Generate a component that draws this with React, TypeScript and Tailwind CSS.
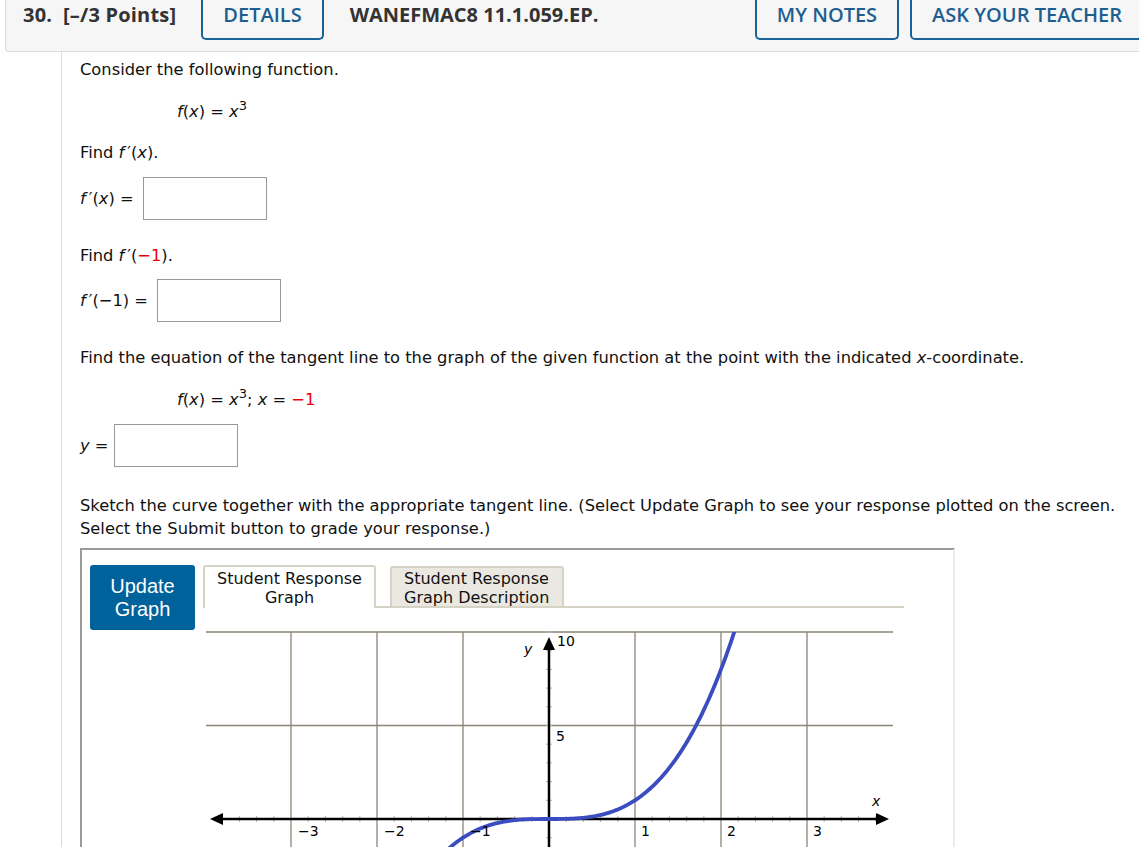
import React from 'react';

const verdana = { fontFamily: '"DejaVu Sans", Verdana, sans-serif' };

const px = (x: number) => 346 + 86 * x;
const py = (y: number) => 198 - 18.7 * y;

const curvePoints = () => {
  const pts: string[] = [];
  for (let x = -2.4; x <= 2.2; x += 0.02) {
    pts.push(`${px(x).toFixed(2)},${py(x * x * x).toFixed(2)}`);
  }
  return pts.join(' ');
};

const Graph = () => {
  const gridX = [-3, -2, -1, 1, 2, 3];
  const minor: number[] = [];
  for (let i = -19; i <= 19; i++) minor.push(i * 0.2);
  const yTicks: number[] = [];
  for (let i = -10; i <= 10; i++) if (i !== 0) yTicks.push(i);

  return (
    <svg width="700" height="240" className="block" style={verdana}>
      <defs>
        <clipPath id="plot">
          <rect x="3" y="11" width="687" height="300" />
        </clipPath>
      </defs>
      {/* grid */}
      <line x1="3" y1="11" x2="690" y2="11" stroke="#8c8474" strokeWidth="1.3" />
      <line x1="3" y1="104.5" x2="690" y2="104.5" stroke="#8c8474" strokeWidth="1.3" />
      {gridX.map((g) => (
        <line key={g} x1={px(g)} y1="11" x2={px(g)} y2="240" stroke="#8c8474" strokeWidth="1.3" />
      ))}
      {/* minor ticks */}
      {minor.map((m) => (
        <line key={m} x1={px(m)} y1="195" x2={px(m)} y2="201" stroke="#b5b5b5" strokeWidth="1" />
      ))}
      {yTicks.map((t) => (
        <line key={t} x1="343" y1={py(t)} x2="349" y2={py(t)} stroke="#b5b5b5" strokeWidth="1" />
      ))}
      {/* axes */}
      <line x1="16" y1="198" x2="676" y2="198" stroke="#000" strokeWidth="2.5" />
      <polygon points="7,198 20,192 20,204" fill="#000" />
      <polygon points="686,198 673,192 673,204" fill="#000" />
      <line x1="346" y1="26" x2="346" y2="240" stroke="#000" strokeWidth="2.5" />
      <polygon points="346,16 340,29 352,29" fill="#000" />
      {/* curve */}
      <polyline
        points={curvePoints()}
        fill="none"
        stroke="#3b4cc0"
        strokeWidth="3.8"
        clipPath="url(#plot)"
      />
      {/* labels */}
      {[-3, -2, -1].map((n) => (
        <text key={n} x={px(n) + 7} y="215" fontSize="14" fill="#000">
          {'\u2212' + Math.abs(n)}
        </text>
      ))}
      {[1, 2, 3].map((n) => (
        <text key={n} x={px(n) + 6} y="215" fontSize="14" fill="#000">
          {n}
        </text>
      ))}
      <text x="354" y="25" fontSize="14" fill="#000">10</text>
      <text x="353" y="120" fontSize="14" fill="#000">5</text>
      <text x="321" y="33" fontSize="14" fontStyle="italic" fill="#000">y</text>
      <text x="669" y="185" fontSize="14" fontStyle="italic" fill="#000">x</text>
    </svg>
  );
};

const AnswerBox = ({ w = 124 }: { w?: number }) => (
  <div className="h-[43px] border border-[#999] bg-white" style={{ width: w }} />
);

const I = ({ children }: { children: React.ReactNode }) => <i>{children}</i>;
const Red = ({ children }: { children: React.ReactNode }) => (
  <span className="text-[#e8000b]">{children}</span>
);
const Cube = () => <span className="relative -top-[7px] text-[13px] leading-none">3</span>;
const Fp = () => (
  <>
    <I>f</I>
    <span className="ml-[3px]">′</span>
  </>
);

const headBtn =
  'h-[40px] border-2 border-t-0 border-[#1a6399] rounded-b-[5px] px-[20px] pt-[1px] leading-[28px] font-semibold text-[#1d5e91]';

export default function App() {
  return (
    <div className="w-[1139px] h-[847px] overflow-hidden bg-white relative">
      {/* header */}
      <div
        className="ml-[5px] w-[1139px] h-[52px] bg-[#f6f6f6] border-b border-l border-[#dcdcdc] rounded-bl-[4px] flex items-start text-[20px]"
        style={{ fontFamily: '"Open Sans", sans-serif' }}
      >
        <div className="pl-[17px] pt-[1px] font-bold text-[#333] leading-[28px] tracking-[0.2px]">30.&nbsp; [–/3 Points]</div>
        <div className={`ml-[25px] ${headBtn}`}>DETAILS</div>
        <div className="ml-[26px] pt-[1px] font-bold text-[#333] leading-[28px]">WANEFMAC8 11.1.059.EP.</div>
        <div className={`ml-auto ${headBtn}`}>MY NOTES</div>
        <div className={`ml-[11px] ${headBtn}`}>ASK YOUR TEACHER</div>
      </div>

      {/* body */}
      <div className="ml-[61px] border-l border-[#dcdcdc] pl-[18px] h-[800px] text-[16.3px] leading-[23px] text-[#111]" style={verdana}>
        <div className="pt-[6px]">Consider the following function.</div>
        <div className="mt-[19px] pl-[97px]">
          <I>f</I>(<I>x</I>) = <I>x</I>
          <Cube />
        </div>
        <div className="mt-[18px]">
          Find <Fp />(<I>x</I>).
        </div>
        <div className="mt-[13px] flex items-center gap-[9px]">
          <span>
            <Fp />(<I>x</I>) =
          </span>
          <AnswerBox />
        </div>
        <div className="mt-[24px]">
          Find <Fp />(<Red>−1</Red>).
        </div>
        <div className="mt-[12px] flex items-center gap-[9px]">
          <span>
            <Fp />(−1) =
          </span>
          <AnswerBox />
        </div>
        <div className="mt-[24px]">
          Find the equation of the tangent line to the graph of the given function at the point with the indicated{' '}
          <I>x</I>-coordinate.
        </div>
        <div className="mt-[19px] pl-[97px]">
          <I>f</I>(<I>x</I>) = <I>x</I>
          <Cube />; <I>x</I> = <Red>−1</Red>
        </div>
        <div className="mt-[13px] flex items-center gap-[6px]">
          <span>
            <I>y</I> =
          </span>
          <AnswerBox />
        </div>
        <div className="mt-[27px] w-[1050px]">
          Sketch the curve together with the appropriate tangent line. (Select Update Graph to see your response plotted
          on the screen. Select the Submit button to grade your response.)
        </div>

        {/* graph panel */}
        <div className="mt-[8px] w-[875px] h-[400px] border-t-2 border-l-2 border-r-2 border-t-[#9a9a9a] border-l-[#9a9a9a] border-r-[#ebebeb] flex pl-[8px] pt-[15px]">
          <div
            className="w-[105px] h-[65px] bg-[#00629b] rounded-[3px] text-white text-[20px] leading-[23px] flex flex-col items-center justify-center"
            style={{ fontFamily: '"Liberation Sans", Arial, sans-serif' }}
          >
            <span>Update</span>
            <span>Graph</span>
          </div>
          <div className="ml-[8px] flex flex-col">
            <div className="flex items-end w-[701px] border-b-2 border-[#d6d2c6] text-[16px] leading-[19px] text-[#111]">
              <div className="w-[173px] h-[43px] bg-white border-2 border-b-0 border-[#d6d2c6] rounded-t-[3px] mb-[-2px] text-center pt-[2px]">
                Student Response
                <br />
                Graph
              </div>
              <div className="ml-[14px] w-[174px] h-[40px] bg-[#ebe8e1] border-2 border-b-0 border-[#d6d2c6] rounded-t-[3px] pl-[12px] pt-[1px] whitespace-nowrap">
                Student Response
                <br />
                Graph Description
              </div>
            </div>
            <div className="mt-[13px]">
              <Graph />
            </div>
          </div>
        </div>
      </div>
    </div>
  );
}
